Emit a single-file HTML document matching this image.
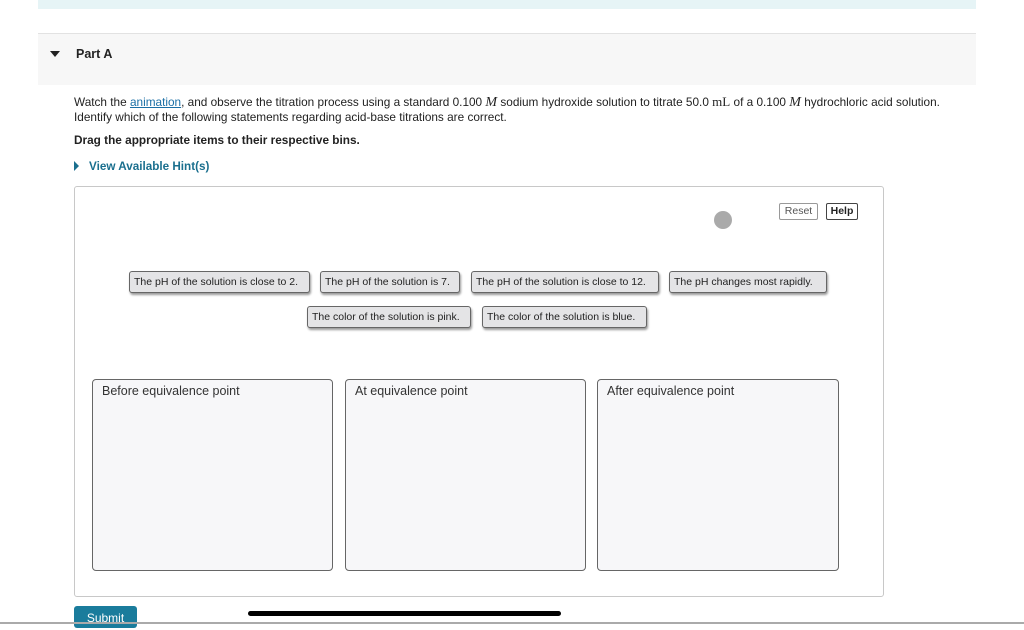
<!DOCTYPE html>
<html><head><style>
*{margin:0;padding:0;box-sizing:border-box}
body{width:1024px;height:624px;overflow:hidden;background:#fff;font-family:"Liberation Sans",Arial,sans-serif;color:#222;position:relative}
.a{position:absolute}
.it{position:absolute;height:22px;background:#e4e4e6;border:1px solid #666;border-radius:3px;box-shadow:1px 2px 2px #999;font-size:10.5px;line-height:20px;padding:0 4px;white-space:nowrap;color:#222}
.bin{position:absolute;top:379px;height:192px;background:#f7f7f9;border:1px solid #666;border-radius:4px;font-size:12.5px;color:#333;padding:4px 9px}
.m{font-family:"Liberation Serif",serif;font-style:italic;font-size:14px}
</style></head><body>
<div class="a" style="left:38px;top:0;width:938px;height:9px;background:#e6f4f6"></div>
<div class="a" style="left:38px;top:33px;width:938px;height:52px;background:#f7f7f7;border-top:1px solid #e2e2e2"></div>
<div class="a" style="left:50px;top:51px;width:0;height:0;border-left:5px solid transparent;border-right:5px solid transparent;border-top:6px solid #222"></div>
<div class="a" style="left:76px;top:47px;font-size:12.5px;font-weight:bold">Part A</div>
<div class="a" style="left:74px;top:94px;font-size:11.8px;line-height:15px;width:920px;white-space:nowrap">Watch the <span style="color:#1b6fa5;text-decoration:underline">animation</span>, and observe the titration process using a standard 0.100 <span class="m">M</span> sodium hydroxide solution to titrate 50.0 <span style="font-family:'Liberation Serif',serif;font-size:13px">mL</span> of a 0.100 <span class="m">M</span> hydrochloric acid solution.<br>Identify which of the following statements regarding acid-base titrations are correct.</div>
<div class="a" style="left:74px;top:133px;font-size:11.8px;font-weight:bold">Drag the appropriate items to their respective bins.</div>
<div class="a" style="left:74px;top:161px;width:0;height:0;border-top:5px solid transparent;border-bottom:5px solid transparent;border-left:5px solid #1a6f8e"></div>
<div class="a" style="left:89px;top:160px;font-size:11.7px;font-weight:bold;color:#1a6f8e">View Available Hint(s)</div>
<div class="a" style="left:74px;top:186px;width:810px;height:411px;border:1px solid #c8c8c8;border-radius:3px"></div>
<div class="a" style="left:714px;top:211px;width:18px;height:18px;border-radius:50%;background:#aaa"></div>
<div class="a" style="left:779px;top:203px;width:39px;height:17px;border:1px solid #999;border-radius:2px;font-size:10.5px;color:#555;text-align:center;line-height:15px">Reset</div>
<div class="a" style="left:826px;top:203px;width:32px;height:17px;border:1px solid #444;border-radius:2px;font-size:10.5px;font-weight:bold;text-align:center;line-height:15px">Help</div>
<div class="it" style="left:129px;top:271px;width:181px">The pH of the solution is close to 2.</div>
<div class="it" style="left:320px;top:271px;width:140px">The pH of the solution is 7.</div>
<div class="it" style="left:471px;top:271px;width:188px">The pH of the solution is close to 12.</div>
<div class="it" style="left:669px;top:271px;width:158px">The pH changes most rapidly.</div>
<div class="it" style="left:307px;top:306px;width:164px">The color of the solution is pink.</div>
<div class="it" style="left:482px;top:306px;width:165px">The color of the solution is blue.</div>
<div class="bin" style="left:92px;width:241px">Before equivalence point</div>
<div class="bin" style="left:345px;width:241px">At equivalence point</div>
<div class="bin" style="left:597px;width:242px">After equivalence point</div>
<div class="a" style="left:74px;top:606px;width:63px;height:22px;background:#1a7c9c;border-radius:3px;color:#fff;font-size:12px;text-align:center;line-height:24px">Submit</div>
<div class="a" style="left:248px;top:611px;width:313px;height:5px;background:#000;border-radius:3px"></div>
<div class="a" style="left:0;top:622px;width:1024px;height:2px;background:#aaa"></div>
</body></html>
